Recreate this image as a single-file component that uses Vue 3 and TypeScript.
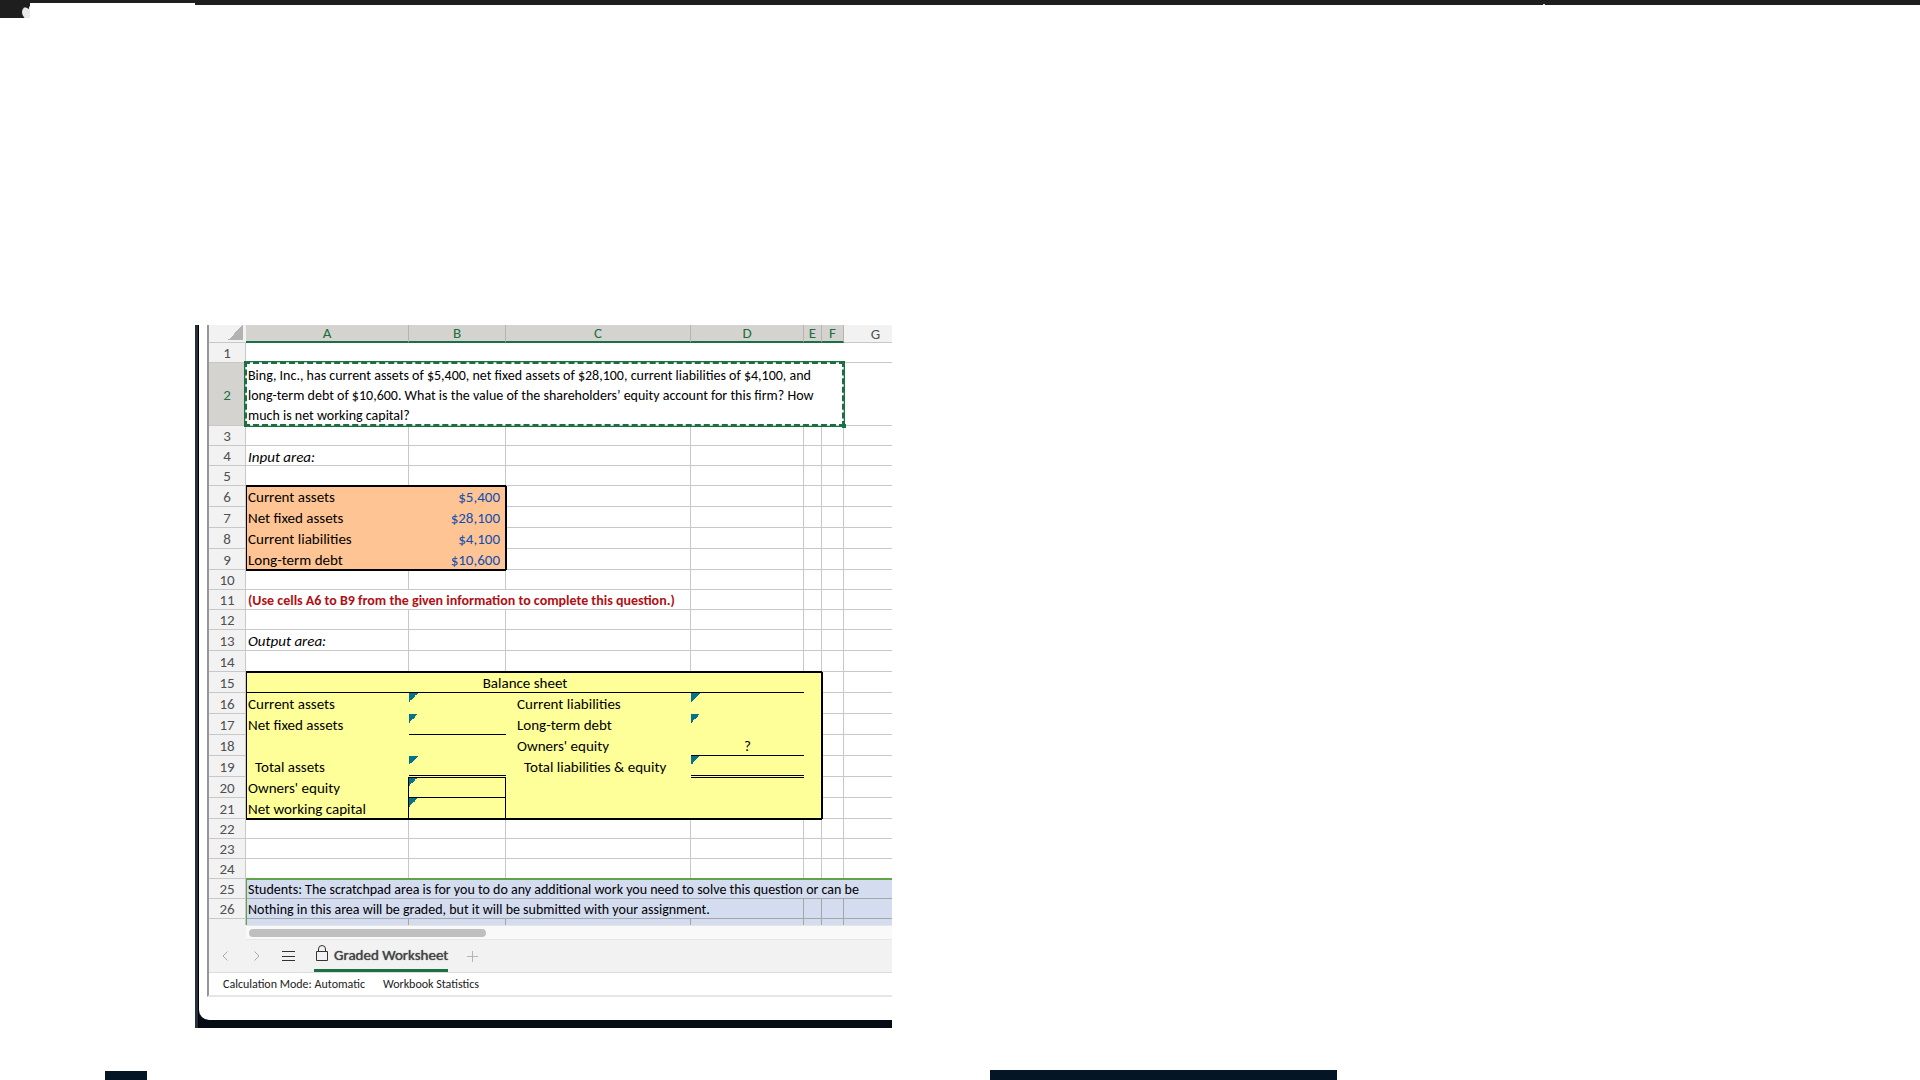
<script setup lang="ts">
interface Cell {
  text?: string
  span?: number
  cls?: string
}
interface Row {
  n: number
  cls?: string
  cells: Cell[]
}

const columns = ['A', 'B', 'C', 'D', 'E', 'F', 'G']

const blank = (count: number, cls = ''): Cell[] => Array.from({ length: count }, () => ({ cls }))

const inputRow = (n: number, label: string, value: string, edge = ''): Row => ({
  n,
  cls: 'tall',
  cells: [
    { text: label, cls: `orange open-right line-left ${edge}` },
    { text: value, cls: `orange money line-right ${edge}` },
    { cls: 'line-left' },
    ...blank(4),
  ],
})

const outputTail = (edge = ''): Cell[] => [
  { cls: `yellow line-right ${edge}` },
  { cls: 'line-left' },
  {},
]

const rows: Row[] = [
  { n: 1, cells: [{ span: 6, cls: 'open-right' }, {}] },
  {
    n: 2,
    cls: 'question',
    cells: [
      {
        span: 6,
        cls: 'selected',
        text: 'Bing, Inc., has current assets of $5,400, net fixed assets of $28,100, current liabilities of $4,100, and long-term debt of $10,600. What is the value of the shareholders’ equity account for this firm? How much is net working capital?',
      },
      {},
    ],
  },
  { n: 3, cells: blank(7) },
  { n: 4, cells: [{ text: 'Input area:', cls: 'italic' }, ...blank(6)] },
  { n: 5, cells: [...blank(2, 'line-bottom'), ...blank(5)] },
  inputRow(6, 'Current assets', '$5,400', 'line-top'),
  inputRow(7, 'Net fixed assets', '$28,100'),
  inputRow(8, 'Current liabilities', '$4,100'),
  inputRow(9, 'Long-term debt', '$10,600', 'line-bottom'),
  { n: 10, cells: [...blank(2, 'line-top'), ...blank(5)] },
  {
    n: 11,
    cells: [
      { span: 3, text: '(Use cells A6 to B9 from the given information to complete this question.)', cls: 'note' },
      ...blank(4),
    ],
  },
  { n: 12, cells: blank(7) },
  { n: 13, cls: 'tall', cells: [{ text: 'Output area:', cls: 'italic' }, ...blank(6)] },
  { n: 14, cls: 'tall', cells: [...blank(5, 'line-bottom'), ...blank(2)] },
  {
    n: 15,
    cls: 'tall',
    cells: [
      { span: 4, text: 'Balance sheet', cls: 'yellow center line-left line-top line-bottom' },
      ...outputTail('line-top'),
    ],
  },
  {
    n: 16,
    cls: 'tall',
    cells: [
      { text: 'Current assets', cls: 'yellow line-left' },
      { cls: 'yellow flag' },
      { text: 'Current liabilities', cls: 'yellow indent' },
      { cls: 'yellow flag' },
      ...outputTail(),
    ],
  },
  {
    n: 17,
    cls: 'tall',
    cells: [
      { text: 'Net fixed assets', cls: 'yellow line-left' },
      { cls: 'yellow flag line-bottom' },
      { text: 'Long-term debt', cls: 'yellow indent' },
      { cls: 'yellow flag' },
      ...outputTail(),
    ],
  },
  {
    n: 18,
    cls: 'tall',
    cells: [
      { cls: 'yellow line-left' },
      { cls: 'yellow' },
      { text: "Owners' equity", cls: 'yellow indent' },
      { text: '?', cls: 'yellow center line-bottom' },
      ...outputTail(),
    ],
  },
  {
    n: 19,
    cls: 'tall',
    cells: [
      { text: 'Total assets', cls: 'yellow line-left total' },
      { cls: 'yellow flag double' },
      { text: 'Total liabilities & equity', cls: 'yellow indent-total' },
      { cls: 'yellow flag double' },
      ...outputTail(),
    ],
  },
  {
    n: 20,
    cls: 'tall',
    cells: [
      { text: "Owners' equity", cls: 'yellow line-left line-right' },
      { cls: 'yellow flag line-top line-right line-bottom' },
      { cls: 'yellow' },
      { cls: 'yellow line-top' },
      ...outputTail(),
    ],
  },
  {
    n: 21,
    cls: 'tall',
    cells: [
      { text: 'Net working capital', cls: 'yellow line-left line-right line-bottom' },
      { cls: 'yellow flag line-right line-bottom' },
      ...blank(2, 'yellow line-bottom'),
      ...outputTail('line-bottom'),
    ],
  },
  { n: 22, cells: [...blank(5, 'line-top'), ...blank(2)] },
  { n: 23, cells: blank(7) },
  { n: 24, cells: blank(7, 'green-bottom') },
  {
    n: 25,
    cells: [
      {
        span: 7,
        text: 'Students: The scratchpad area is for you to do any additional work you need to solve this question or can be',
        cls: 'blue green-top green-left open-right',
      },
    ],
  },
  {
    n: 26,
    cells: [
      {
        span: 4,
        text: 'Nothing in this area will be graded, but it will be submitted with your assignment.',
        cls: 'blue green-left',
      },
      ...blank(3, 'blue'),
    ],
  },
  { n: 27, cells: [{ cls: 'blue green-left' }, ...blank(6, 'blue')] },
]
</script>

<template>
  <div class="page">
    <header class="menubar">
      <div class="menu-left">
        <svg class="apple" viewBox="0 0 8 12" aria-hidden="true">
          <path d="M8 0 7 1v2L4 1.500H2Q0 3.500 0 6.500 0 9 2.500 12H8z" fill="#e8e8e8" />
        </svg>
      </div>
      <div class="menu-tab"></div>
      <div class="menu-rest"><i class="speck"></i></div>
    </header>

    <main class="desktop">
      <section class="window">
        <div class="workbook">
          <div class="viewport">
            <table class="sheet">
              <colgroup>
                <col class="w-head" />
                <col v-for="c in columns" :key="c" :class="`w-${c}`" />
              </colgroup>
              <thead>
                <tr>
                  <th class="corner" aria-label="Select all"></th>
                  <th v-for="c in columns" :key="c" scope="col" :class="{ active: c !== 'G' }">{{ c }}</th>
                </tr>
              </thead>
              <tbody>
                <tr v-for="row in rows" :key="row.n" :class="row.cls">
                  <th scope="row" :class="{ current: row.n === 2 }">{{ row.n }}</th>
                  <td v-for="(cell, i) in row.cells" :key="i" :colspan="cell.span" :class="cell.cls">
                    {{ cell.text }}
                    <span v-if="cell.cls === 'selected'" class="ants"></span>
                  </td>
                </tr>
              </tbody>
            </table>
          </div>
          <div class="scroll"><div class="thumb"></div></div>
          <nav class="tabs">
            <button type="button" aria-label="Previous sheet">
              <svg width="6" height="10" viewBox="0 0 6 10"><path d="M5.500.5 1 5l4.500 4.500" stroke="#a8a8a8" /></svg>
            </button>
            <button type="button" aria-label="Next sheet">
              <svg width="6" height="10" viewBox="0 0 6 10"><path d="M.5.5 5 5 .5 9.500" stroke="#a8a8a8" /></svg>
            </button>
            <button type="button" class="list" aria-label="All sheets">
              <svg width="13" height="10" viewBox="0 0 13 10"><path d="M0 .5h13M0 5.500h13M0 9.500h13" stroke="#333" /></svg>
            </button>
            <button type="button" class="tab">
              <svg width="12" height="16" viewBox="0 0 12 16">
                <path d="M.5 6.500h11v9H.5zM2.500 6.500V4a3.500 3.500 0 0 1 7 0v2.500" stroke="#333" />
              </svg>
              <span>Graded Worksheet</span>
            </button>
            <button type="button" aria-label="Add sheet">
              <svg width="11" height="11" viewBox="0 0 11 11"><path d="M5.500 0v11M0 5.500h11" stroke="#b5b5b5" /></svg>
            </button>
          </nav>
          <footer class="status">
            <span>Calculation Mode: Automatic</span>
            <span>Workbook Statistics</span>
          </footer>
        </div>
      </section>
    </main>

    <div class="strips">
      <div class="strip small"></div>
      <div class="strip large"></div>
    </div>
  </div>
</template>

<style>
body {
  margin: 0;
  background: #fff;
}
</style>

<style scoped>
* {
  box-sizing: border-box;
}
.page {
  display: flex;
  flex-direction: column;
  min-height: 100vh;
  background: #fff;
  font-family: Carlito, Calibri, Lato, sans-serif;
}
.menubar {
  display: flex;
  align-items: flex-start;
  height: 18px;
}
.menu-left {
  display: flex;
  justify-content: flex-end;
  align-items: flex-end;
  width: 30px;
  height: 18px;
  background: #1e1e1e;
}
.apple {
  width: 8px;
  height: 12px;
}
.menu-tab {
  width: 165px;
  height: 3px;
  background: #1e1e1e;
}
.menu-rest {
  display: flex;
  flex: 1;
  align-items: flex-end;
  justify-content: flex-end;
  height: 5px;
  padding-right: 20%;
  background: #1e1e1e;
}
.speck {
  width: 2px;
  height: 1px;
  margin-right: -9px;
  background: #ddd;
}
.desktop {
  width: 697px;
  margin: 307px 0 0 195px;
  padding: 0 0 8px 4px;
  background: linear-gradient(90deg, #24303c 0 3px, #000 3px 4px, transparent 4px), #040c15;
}
.window {
  padding: 0 0 23px 8px;
  background: #fff;
  border-bottom-left-radius: 10px;
}
.workbook {
  border-left: 2px solid #969696;
  border-bottom: 2px solid #e6e6e6;
}
.viewport {
  height: 600px;
  overflow: hidden;
}
.sheet {
  width: 699px;
  table-layout: fixed;
  border-collapse: separate;
  border-spacing: 0;
  color: #000;
  font-size: 15px;
  line-height: 18px;
}
.w-head { width: 37px; }
.w-A { width: 163px; }
.w-B { width: 97px; }
.w-C { width: 185px; }
.w-D { width: 113px; }
.w-E { width: 18px; }
.w-F { width: 22px; }
.w-G { width: 64px; }
th {
  height: 20px;
  padding: 1px 0 0;
  border: 0 solid #c8c8c8;
  border-width: 0 1px 1px 0;
  background: #f2f2f2;
  color: #505050;
  font-weight: 400;
  text-align: center;
}
thead th {
  height: 18px;
  line-height: 15px;
}
thead th.active {
  border-right-color: #b4b4b4;
  border-bottom: 2px solid #1a6f43;
  background: #d5d3cf;
  color: #1a6f43;
}
.corner {
  border-right-color: #f2f2f2;
  background: linear-gradient(to bottom right, transparent 50%, #b2b2b2 50%) right 2px bottom 2px / 15px 15px no-repeat #f2f2f2;
}
th.current {
  background: #d5d3cf;
  color: #1a6f43;
}
td {
  --top: transparent;
  --left: transparent;
  --right: #c8c8c8;
  --bottom: #c8c8c8;
  height: 20px;
  padding: 1px 2px 0;
  box-shadow:
    inset 0 1px var(--top),
    inset 1px 0 var(--left),
    inset 0 -1px var(--bottom),
    inset -1px 0 var(--right);
  white-space: nowrap;
  vertical-align: middle;
}
.tall th,
.tall td {
  height: 21px;
}
.question th,
.question td {
  height: 63px;
}
td.selected {
  position: relative;
  padding-top: 3px;
  padding-right: 11px;
  font-size: 14px;
  line-height: 20px;
  white-space: normal;
}
.ants {
  position: absolute;
  inset: -2px -1px -1px -2px;
  border: 3px dashed #1a6f43;
  outline: 1px solid #1a6f43;
  outline-offset: -1px;
}
.ants::after {
  content: '';
  position: absolute;
  right: -4px;
  bottom: -4px;
  width: 4px;
  height: 4px;
  background: #1a6f43;
}
td.italic { font-style: italic; }
td.note {
  color: #b01016;
  font-size: 14px;
  font-weight: 700;
}
td.orange {
  --bottom: transparent;
  background-color: #ffc493;
}
td.yellow {
  --right: transparent;
  --bottom: transparent;
  background-color: #ffff99;
}
td.blue {
  --right: #a6a6a6;
  --bottom: #a6a6a6;
  background-color: #d4dcef;
  font-size: 14px;
}
td.money {
  padding-right: 6px;
  color: #0f4fb4;
  text-align: right;
}
td.center { text-align: center; }
td.indent { padding-left: 11px; }
td.total { padding-left: 9px; }
td.indent-total { padding-left: 18px; }
td.flag {
  background-image: linear-gradient(to bottom right, #05738a 50%, transparent 50%);
  background-repeat: no-repeat;
  background-size: 9px 9px;
}
td.open-right { --right: transparent; }
td.line-left { --left: #000; }
td.line-right { --right: #000; }
td.line-top { --top: #000; }
td.line-bottom { --bottom: #000; }
td.double {
  box-shadow: inset 0 -1px #ffff99, inset 0 -2px #000;
}
td.green-top { --top: #5fa548; }
td.green-bottom { --bottom: #5fa548; }
td.green-left { --left: #5fa548; }
.scroll {
  height: 15px;
  margin-left: 37px;
  padding: 3px;
  border: 1px solid #e6e6e6;
  border-width: 1px 0;
  background: #f9f9f9;
  box-shadow: -37px 0 #f2f2f2;
}
.thumb {
  width: 237px;
  height: 8px;
  border-radius: 4px;
  background: #bfbfbf;
}
.tabs {
  display: flex;
  align-items: center;
  height: 33px;
  padding-left: 13px;
  border-bottom: 1px solid #dcdcdc;
  background: #f2f2f2;
}
.tabs button {
  display: flex;
  align-items: center;
  padding: 0;
  border: 0;
  background: none;
  font: inherit;
}
.tabs svg {
  fill: none;
}
.tabs button + button {
  margin-left: 26px;
}
.tabs button.list {
  margin-left: 22px;
}
.tabs button.tab {
  align-self: stretch;
  gap: 6px;
  margin-left: 19px;
  padding: 0 0 0 2px;
  border-bottom: 3px solid #1a6f43;
  color: #444;
  font-size: 15px;
  text-shadow: 0 0 1px currentColor;
}
.tabs button.tab + button {
  margin-left: 19px;
}
.tab svg {
  margin-bottom: 4px;
}
.status {
  display: flex;
  gap: 18px;
  height: 22px;
  padding-left: 14px;
  font-size: 12px;
  line-height: 22px;
  color: #222;
}
.strips {
  display: flex;
  align-items: flex-end;
  height: 10px;
  margin-top: auto;
  padding-left: 105px;
}
.strip {
  background: #041625;
}
.small {
  width: 42px;
  height: 9px;
}
.large {
  width: 347px;
  height: 10px;
  margin-left: 843px;
}
</style>
